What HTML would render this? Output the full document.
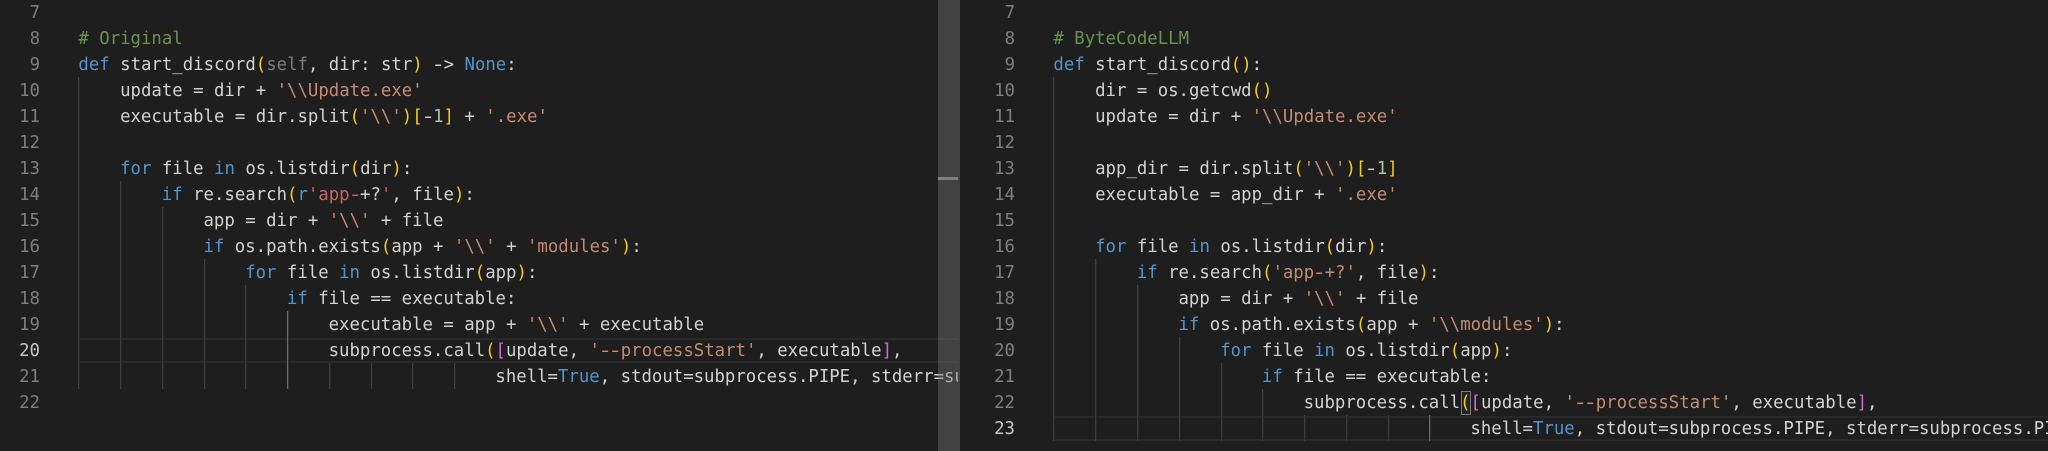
<!DOCTYPE html>
<html><head><meta charset="utf-8">
<style>
html,body{margin:0;padding:0;background:#1e1e1e}
#r{position:relative;width:2048px;height:451px;overflow:hidden;background:#1e1e1e;font-family:"DejaVu Sans Mono","Liberation Mono",monospace;font-size:17.33px;color:#d2d2d2}
.pane{position:absolute;top:0;height:451px;overflow:hidden}
.t{position:absolute;height:26px;line-height:26px;margin-top:1px;white-space:pre;filter:blur(.35px)}
.n{position:absolute;left:0;width:40px;height:26px;line-height:26px;margin-top:1px;text-align:right;color:#7e7e7e;filter:blur(.35px)}
.g{position:absolute;width:1px;background:#3e3e3e;box-shadow:1px 0 0 #272727}
.a{background:#6c6c6c;box-shadow:1px 0 0 #303030}
.hl{position:absolute;height:21px;border-top:2px solid #282828;border-bottom:2px solid #282828}
.k{color:#5394cb}.s{color:#c48b72}.c{color:#67934f}.y{color:#f2cc14}.p{color:#cf6bcb}.m{color:#adc4a0}.d{color:#7c7c7c}.x{color:#c96464}
.h{display:inline-block;transform:scaleX(1.35)}
</style></head><body><div id="r">

<div class="pane" style="left:0;width:958px">
<div class="hl" style="left:78px;width:880px;top:338px"></div>
<div class="g" style="left:78px;top:77px;height:312px"></div>
<div class="g" style="left:120px;top:181px;height:208px"></div>
<div class="g" style="left:162px;top:207px;height:182px"></div>
<div class="g" style="left:204px;top:259px;height:130px"></div>
<div class="g" style="left:245px;top:285px;height:104px"></div>
<div class="g a" style="left:287px;top:311px;height:78px"></div>
<div class="g" style="left:329px;top:363px;height:26px"></div>
<div class="g" style="left:371px;top:363px;height:26px"></div>
<div class="g" style="left:412px;top:363px;height:26px"></div>
<div class="g" style="left:454px;top:363px;height:26px"></div>
<div class="n" style="top:-1px">7</div>
<div class="n" style="top:25px">8</div>
<div class="n" style="top:51px">9</div>
<div class="n" style="top:77px">10</div>
<div class="n" style="top:103px">11</div>
<div class="n" style="top:129px">12</div>
<div class="n" style="top:155px">13</div>
<div class="n" style="top:181px">14</div>
<div class="n" style="top:207px">15</div>
<div class="n" style="top:233px">16</div>
<div class="n" style="top:259px">17</div>
<div class="n" style="top:285px">18</div>
<div class="n" style="top:311px">19</div>
<div class="n" style="top:337px;color:#c6c6c6">20</div>
<div class="n" style="top:363px">21</div>
<div class="n" style="top:389px">22</div>
<div class="t c" style="left:78.4px;top:25px"># Original</div>
<div class="t" style="left:78.4px;top:51px"><span class="k">def</span> start_discord<span class="y">(</span><span class="d">self</span>, dir: str<span class="y">)</span> <span class="h">-</span>&gt; <span class="k">None</span>:</div>
<div class="t" style="left:120.1px;top:77px">update = dir + <span class="s">'\\Update.exe'</span></div>
<div class="t" style="left:120.1px;top:103px">executable = dir.split<span class="y">(</span><span class="s">'\\'</span><span class="y">)[</span><span class="h">-</span><span class="m">1</span><span class="y">]</span> + <span class="s">'.exe'</span></div>
<div class="t" style="left:120.1px;top:155px"><span class="k">for</span> file <span class="k">in</span> os.listdir<span class="y">(</span>dir<span class="y">)</span>:</div>
<div class="t" style="left:161.8px;top:181px"><span class="k">if</span> re.search<span class="y">(</span><span class="k">r</span><span class="x">'app<span class="h">-</span></span>+?<span class="x">'</span>, file<span class="y">)</span>:</div>
<div class="t" style="left:203.5px;top:207px">app = dir + <span class="s">'\\'</span> + file</div>
<div class="t" style="left:203.5px;top:233px"><span class="k">if</span> os.path.exists<span class="y">(</span>app + <span class="s">'\\'</span> + <span class="s">'modules'</span><span class="y">)</span>:</div>
<div class="t" style="left:245.2px;top:259px"><span class="k">for</span> file <span class="k">in</span> os.listdir<span class="y">(</span>app<span class="y">)</span>:</div>
<div class="t" style="left:286.9px;top:285px"><span class="k">if</span> file == executable:</div>
<div class="t" style="left:328.6px;top:311px">executable = app + <span class="s">'\\'</span> + executable</div>
<div class="t" style="left:328.6px;top:337px">subprocess.call<span class="y">(</span><span class="p">[</span>update, <span class="s">'<span class="h">-</span><span class="h">-</span>processStart'</span>, executable<span class="p">]</span>,</div>
<div class="t" style="left:495.4px;top:363px">shell=<span class="k">True</span>, stdout=subprocess.PIPE, stderr=subprocess.PIPE<span class="y">)</span></div>
</div>

<div style="position:absolute;left:938px;top:0;width:22px;height:451px;background:rgba(121,121,121,.4)"></div>
<div style="position:absolute;left:938px;top:177px;width:20px;height:3px;background:#808080"></div>

<div class="pane" style="left:975px;width:1073px">
<div class="hl" style="left:78px;width:995px;top:416px"></div>
<div class="g" style="left:78px;top:77px;height:364px"></div>
<div class="g" style="left:120px;top:259px;height:182px"></div>
<div class="g" style="left:162px;top:285px;height:156px"></div>
<div class="g" style="left:204px;top:337px;height:104px"></div>
<div class="g" style="left:246px;top:363px;height:78px"></div>
<div class="g" style="left:287px;top:389px;height:52px"></div>
<div class="g" style="left:329px;top:415px;height:26px"></div>
<div class="g" style="left:371px;top:415px;height:26px"></div>
<div class="g" style="left:413px;top:415px;height:26px"></div>
<div class="g a" style="left:454px;top:415px;height:26px"></div>
<div style="position:absolute;left:486px;top:391px;width:8px;height:22px;border:1px solid #7a7a7a;background:#25251f"></div>
<div class="n" style="top:-1px">7</div>
<div class="n" style="top:25px">8</div>
<div class="n" style="top:51px">9</div>
<div class="n" style="top:77px">10</div>
<div class="n" style="top:103px">11</div>
<div class="n" style="top:129px">12</div>
<div class="n" style="top:155px">13</div>
<div class="n" style="top:181px">14</div>
<div class="n" style="top:207px">15</div>
<div class="n" style="top:233px">16</div>
<div class="n" style="top:259px">17</div>
<div class="n" style="top:285px">18</div>
<div class="n" style="top:311px">19</div>
<div class="n" style="top:337px">20</div>
<div class="n" style="top:363px">21</div>
<div class="n" style="top:389px">22</div>
<div class="n" style="top:415px;color:#c6c6c6">23</div>
<div class="t c" style="left:78.4px;top:25px"># ByteCodeLLM</div>
<div class="t" style="left:78.4px;top:51px"><span class="k">def</span> start_discord<span class="y">()</span>:</div>
<div class="t" style="left:120.1px;top:77px">dir = os.getcwd<span class="y">()</span></div>
<div class="t" style="left:120.1px;top:103px">update = dir + <span class="s">'\\Update.exe'</span></div>
<div class="t" style="left:120.1px;top:155px">app_dir = dir.split<span class="y">(</span><span class="s">'\\'</span><span class="y">)[</span><span class="h">-</span><span class="m">1</span><span class="y">]</span></div>
<div class="t" style="left:120.1px;top:181px">executable = app_dir + <span class="s">'.exe'</span></div>
<div class="t" style="left:120.1px;top:233px"><span class="k">for</span> file <span class="k">in</span> os.listdir<span class="y">(</span>dir<span class="y">)</span>:</div>
<div class="t" style="left:161.8px;top:259px"><span class="k">if</span> re.search<span class="y">(</span><span class="s">'app<span class="h">-</span>+?'</span>, file<span class="y">)</span>:</div>
<div class="t" style="left:203.5px;top:285px">app = dir + <span class="s">'\\'</span> + file</div>
<div class="t" style="left:203.5px;top:311px"><span class="k">if</span> os.path.exists<span class="y">(</span>app + <span class="s">'\\modules'</span><span class="y">)</span>:</div>
<div class="t" style="left:245.2px;top:337px"><span class="k">for</span> file <span class="k">in</span> os.listdir<span class="y">(</span>app<span class="y">)</span>:</div>
<div class="t" style="left:286.9px;top:363px"><span class="k">if</span> file == executable:</div>
<div class="t" style="left:328.6px;top:389px">subprocess.call<span class="y">(</span><span class="p">[</span>update, <span class="s">'<span class="h">-</span><span class="h">-</span>processStart'</span>, executable<span class="p">]</span>,</div>
<div class="t" style="left:495.4px;top:415px">shell=<span class="k">True</span>, stdout=subprocess.PIPE, stderr=subprocess.PIPE<span class="y">)</span></div>
</div>

</div></body></html>
